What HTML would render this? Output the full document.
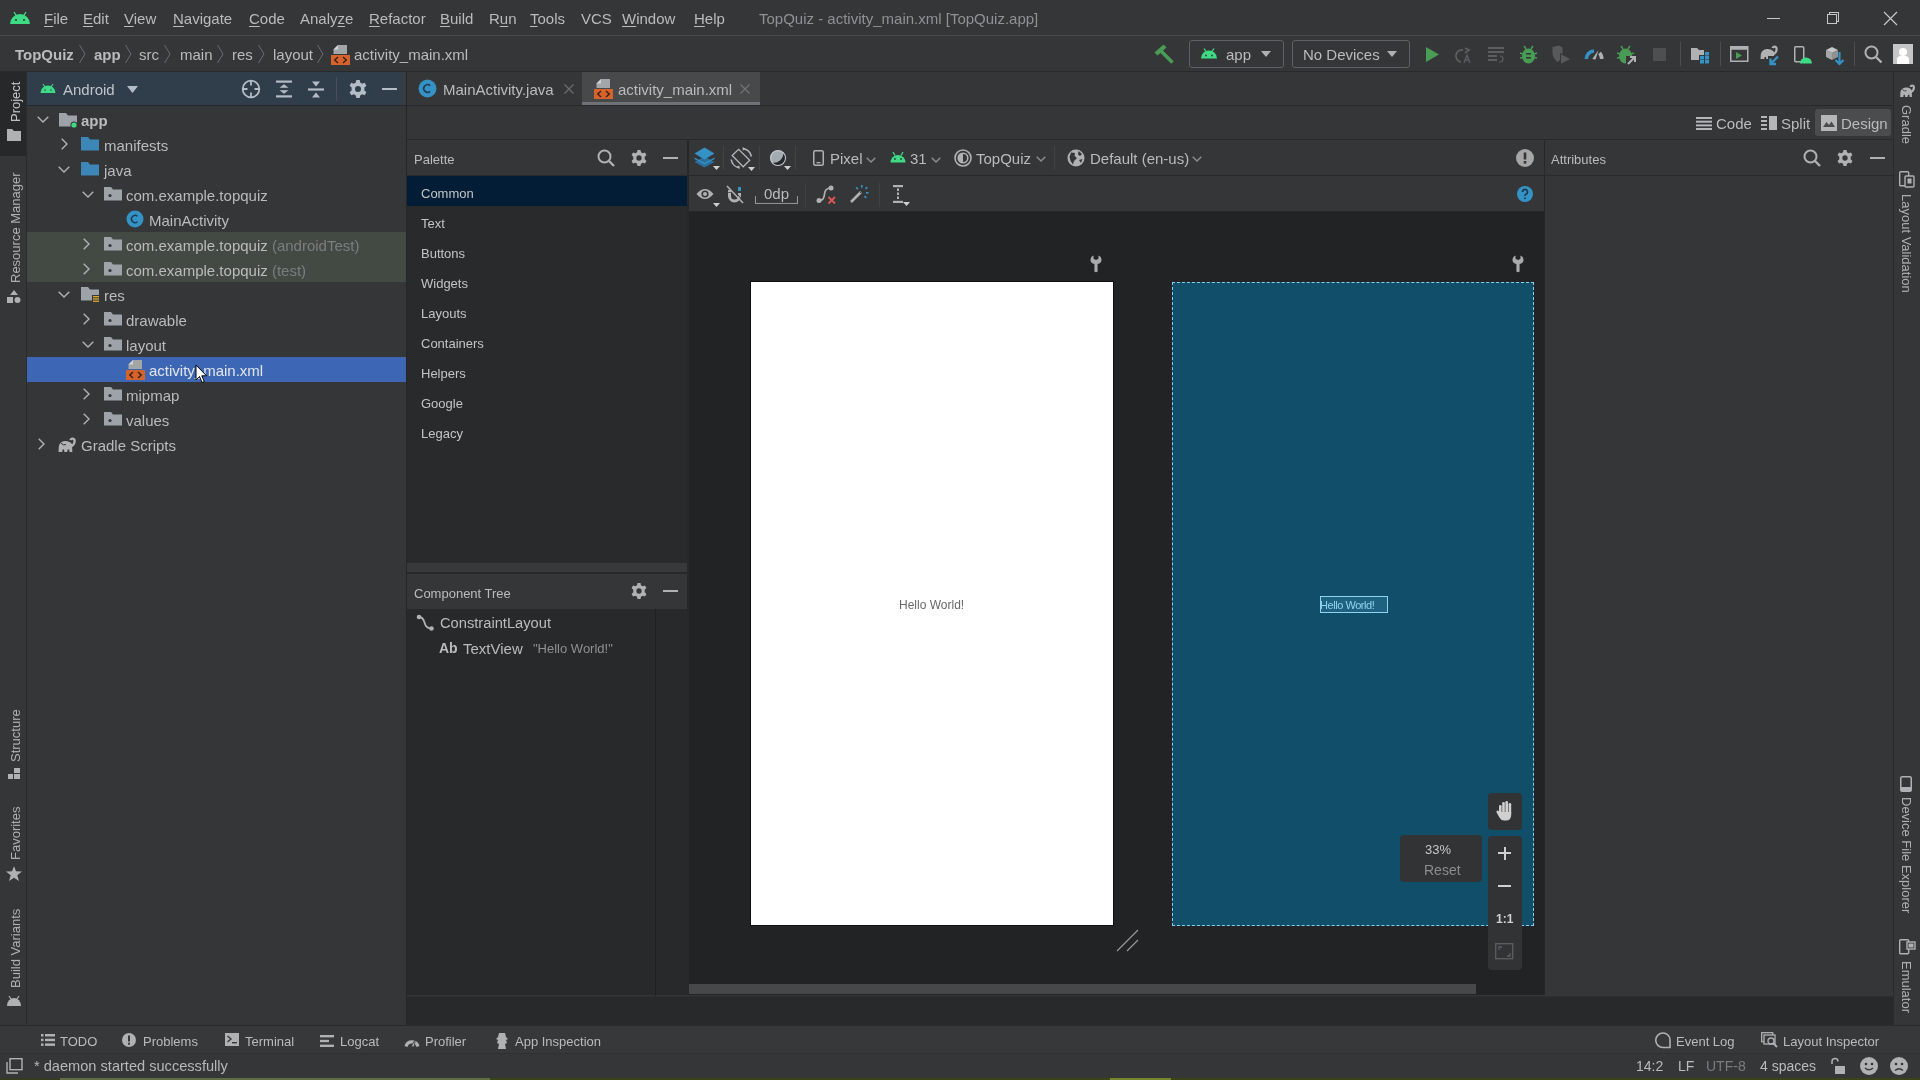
<!DOCTYPE html>
<html><head><meta charset="utf-8">
<style>
*{margin:0;padding:0;box-sizing:border-box}
html,body{width:1920px;height:1080px;overflow:hidden;background:#353638;font-family:"Liberation Sans",sans-serif;color:#bbbbbb;font-size:15px}
.a{position:absolute}
.t{position:absolute;white-space:nowrap;line-height:1;will-change:transform}
svg{position:absolute;overflow:visible}
.u{text-decoration:underline;text-underline-offset:2px;text-decoration-thickness:1px}
</style></head><body>

<!-- MENU BAR -->
<div class="a" style="left:0;top:0;width:1920px;height:36px;background:#353638;border-bottom:1px solid #4a4b4d"></div>
<svg style="left:9px;top:11px" width="22" height="14" viewBox="0 0 22 14"><path d="M1 13 A10 10 0 0 1 21 13 Z" fill="#3ddc84"/><path d="M5 1 L7.5 5 M17 1 L14.5 5" stroke="#3ddc84" stroke-width="1.4"/><circle cx="7" cy="9" r="1" fill="#353638"/><circle cx="15" cy="9" r="1" fill="#353638"/></svg>
<div class="t" style="left:44px;top:11px"><span class="u">F</span>ile</div>
<div class="t" style="left:83px;top:11px"><span class="u">E</span>dit</div>
<div class="t" style="left:124px;top:11px"><span class="u">V</span>iew</div>
<div class="t" style="left:173px;top:11px"><span class="u">N</span>avigate</div>
<div class="t" style="left:249px;top:11px"><span class="u">C</span>ode</div>
<div class="t" style="left:300px;top:11px">Analy<span class="u">z</span>e</div>
<div class="t" style="left:369px;top:11px"><span class="u">R</span>efactor</div>
<div class="t" style="left:440px;top:11px"><span class="u">B</span>uild</div>
<div class="t" style="left:489px;top:11px">R<span class="u">u</span>n</div>
<div class="t" style="left:530px;top:11px"><span class="u">T</span>ools</div>
<div class="t" style="left:581px;top:11px">VCS</div>
<div class="t" style="left:622px;top:11px"><span class="u">W</span>indow</div>
<div class="t" style="left:694px;top:11px"><span class="u">H</span>elp</div>
<div class="t" style="left:759px;top:11px;color:#8f9193">TopQuiz - activity_main.xml [TopQuiz.app]</div>
<div class="a" style="left:1767px;top:18px;width:13px;height:1px;background:#c8c8c8"></div>
<div class="a" style="left:1829px;top:12px;width:10px;height:10px;border:1px solid #c8c8c8"></div>
<div class="a" style="left:1827px;top:14px;width:10px;height:10px;border:1px solid #c8c8c8;background:#353638"></div>
<svg style="left:1884px;top:12px" width="13" height="13"><path d="M0 0 L13 13 M13 0 L0 13" stroke="#c8c8c8" stroke-width="1.2"/></svg>

<!-- NAV BAR -->
<div class="a" style="left:0;top:36px;width:1920px;height:36px;background:#353638;border-bottom:1px solid #28292a"></div>
<div class="t" style="left:15px;top:47px;font-weight:bold">TopQuiz</div>
<div class="t" style="left:94px;top:47px;font-weight:bold">app</div>
<div class="t" style="left:139px;top:47px">src</div>
<div class="t" style="left:180px;top:47px">main</div>
<div class="t" style="left:232px;top:47px">res</div>
<div class="t" style="left:273px;top:47px">layout</div>
<div class="t" style="left:354px;top:47px">activity_main.xml</div>


<!-- nav chevrons -->
<svg style="left:0;top:0" width="1" height="1">
<g stroke="#6b6d70" stroke-width="1" fill="none">
<path d="M79.5 45 L85 54 L79.5 63"/><path d="M125.5 45 L131 54 L125.5 63"/><path d="M164.5 45 L170 54 L164.5 63"/><path d="M217.5 45 L223 54 L217.5 63"/><path d="M258.5 45 L264 54 L258.5 63"/><path d="M317.5 45 L323 54 L317.5 63"/>
</g></svg>
<!-- xml file icon nav -->
<svg style="left:331px;top:45px" width="19" height="20" viewBox="0 0 19 20"><path d="M7 0 L16 0 L16 9 L2.5 9 L2.5 4.5 Z" fill="#a3a6a9"/><path d="M2.5 4.5 L7 4.5 L7 0 Z" fill="#d0d2d4"/><rect x="0" y="10" width="19" height="10" fill="#d6622c"/><path d="M7 12 L3.8 15 L7 18 M12 12 L15.2 15 L12 18" stroke="#3a2418" stroke-width="1.5" fill="none"/></svg>

<!-- toolbar right -->
<svg style="left:1150px;top:38px" width="26" height="28" viewBox="0 0 26 28"><path d="M4.5 14.5 L13.5 6.5 L16.5 9.5 L7.5 17.5 Z" fill="#499c54"/><path d="M10 12 L22.5 24.5" stroke="#499c54" stroke-width="3.6"/></svg>
<div class="a" style="left:1189px;top:40px;width:95px;height:28px;border:1px solid #5e6163;border-radius:3px"></div>
<svg style="left:1200px;top:48px" width="18" height="11" viewBox="0 0 18 11"><path d="M1 10.5 A8 8 0 0 1 17 10.5 Z" fill="#3ddc84"/><path d="M4 0.5 L6 3.5 M14 0.5 L12 3.5" stroke="#3ddc84" stroke-width="1.3"/><circle cx="6" cy="7.5" r="0.9" fill="#353638"/><circle cx="12" cy="7.5" r="0.9" fill="#353638"/></svg>
<div class="t" style="left:1226px;top:47px">app</div>
<svg style="left:1261px;top:51px" width="10" height="6"><path d="M0 0 L10 0 L5 6 Z" fill="#afb1b3"/></svg>
<div class="a" style="left:1292px;top:40px;width:118px;height:28px;border:1px solid #5e6163;border-radius:3px"></div>
<div class="t" style="left:1303px;top:47px">No Devices</div>
<svg style="left:1387px;top:51px" width="10" height="6"><path d="M0 0 L10 0 L5 6 Z" fill="#afb1b3"/></svg>
<svg style="left:1426px;top:47px" width="13" height="15"><path d="M0 0 L13 7.5 L0 15 Z" fill="#499c54"/></svg>
<svg style="left:1455px;top:46px" width="18" height="18" viewBox="0 0 18 18" fill="none" stroke="#5c5e60" stroke-width="1.8"><path d="M8 4 A6 6 0 1 0 6 16"/><path d="M10 2 L14 4 L10 7"/><path d="M9 17 L12 9 L15 17 M10 14 L14 14" stroke-width="1.3"/></svg>
<svg style="left:1488px;top:47px" width="18" height="16" viewBox="0 0 18 16" fill="#5c5e60"><rect x="0" y="0" width="16" height="2"/><rect x="0" y="4" width="16" height="2"/><rect x="0" y="8" width="9" height="2"/><rect x="0" y="12" width="9" height="2"/><path d="M12 9 A3 3 0 1 1 12 15 L11 15" stroke="#5c5e60" stroke-width="1.2" fill="none"/></svg>
<svg style="left:1520px;top:45px" width="17" height="19" viewBox="0 0 17 19"><path d="M4 1 L6 4 M13 1 L11 4" stroke="#499c54" stroke-width="1.5"/><ellipse cx="8.5" cy="11" rx="6.5" ry="7.5" fill="#499c54"/><path d="M0 8 L3 9 M17 8 L14 9 M0 13 L3 12.5 M17 13 L14 12.5" stroke="#499c54" stroke-width="1.5"/><rect x="6" y="8" width="5" height="1.6" fill="#353638"/><rect x="6" y="12" width="5" height="1.6" fill="#353638"/></svg>
<svg style="left:1552px;top:45px" width="20" height="20" viewBox="0 0 20 20"><path d="M0.5 2 L7 0.5 L10.5 2.5 L10.5 9 Q10 14 5.5 17 Q0.5 13 0.5 8 Z" fill="#58595b"/><path d="M8.5 8.5 L19 14 L8.5 19.5 Z" fill="#58595b" stroke="#353638" stroke-width="1"/></svg>
<svg style="left:1584px;top:46px" width="20" height="14" viewBox="0 0 20 14"><path d="M2.3 13 A8 8 0 0 1 10 5" stroke="#3592c4" stroke-width="3.6" fill="none"/><path d="M15.5 7 A8 8 0 0 1 17.7 13" stroke="#afb1b3" stroke-width="3.6" fill="none"/><path d="M8.3 13 L14.5 4 L11.5 13.5 Z" fill="#afb1b3"/></svg>
<svg style="left:1617px;top:45px" width="20" height="20" viewBox="0 0 20 20"><path d="M4 1 L6 4 M13 1 L11 4" stroke="#499c54" stroke-width="1.5"/><ellipse cx="8.5" cy="11" rx="6.5" ry="7.5" fill="#499c54"/><path d="M0 8 L3 9 M17 8 L14 9 M0 13 L3 12.5" stroke="#499c54" stroke-width="1.5"/><rect x="9" y="11" width="11" height="9" fill="#353638"/><path d="M11 19 L18 12 M13 12 L18 12 L18 17" stroke="#afb1b3" stroke-width="2" fill="none"/></svg>
<div class="a" style="left:1653px;top:48px;width:13px;height:13px;background:#4e4f51"></div>
<div class="a" style="left:1680px;top:42px;width:1px;height:24px;background:#4b4d4f"></div>
<svg style="left:1691px;top:48px" width="19" height="16" viewBox="0 0 19 16"><path d="M0 0 L6 0 L8 2 L13 2 L13 7 L8 7 L8 12 L0 12 Z" fill="#afb1b3"/><rect x="9" y="8" width="4" height="3.5" fill="#3592c4"/><rect x="14" y="4" width="4" height="3.5" fill="#3592c4"/><rect x="14" y="8" width="4" height="3.5" fill="#3592c4"/><rect x="9" y="12" width="4" height="3.5" fill="#3592c4"/><rect x="14" y="12" width="4" height="3.5" fill="#3592c4"/></svg>
<div class="a" style="left:1720px;top:42px;width:1px;height:24px;background:#4b4d4f"></div>
<svg style="left:1730px;top:46px" width="19" height="16" viewBox="0 0 19 16"><rect x="0.75" y="0.75" width="17" height="14.5" fill="none" stroke="#afb1b3" stroke-width="1.5"/><rect x="0.75" y="0.75" width="17" height="3" fill="#afb1b3"/><path d="M6 6 L12 9.5 L6 13 Z" fill="#499c54"/></svg>
<svg style="left:1759px;top:45px" width="21" height="21" viewBox="0 0 21 21"><path d="M1.5 14 L1.8 9.5 Q2.5 4.5 8 4 Q11.5 3.8 13.5 5.5 L15 7 L15.3 14 L12.6 14 L12.2 12 L10.6 12 L10.2 14 L7.4 14 L7 12 L5.6 12 L5.2 14 Z" fill="#b0b2b4"/><path d="M13.5 9.5 Q17.6 8 17.6 4 Q17.6 1.6 15.5 1.6 Q13.8 1.6 13.6 3.2" stroke="#b0b2b4" stroke-width="2.2" fill="none"/><rect x="9" y="11" width="12" height="10" fill="#353638"/><path d="M11.5 19 L19 11.5 M11.5 13.5 L11.5 19 L17 19" stroke="#3592c4" stroke-width="2.3" fill="none"/></svg>
<svg style="left:1794px;top:46px" width="18" height="18" viewBox="0 0 18 18"><rect x="0.75" y="0.75" width="9" height="15" rx="1" fill="none" stroke="#afb1b3" stroke-width="1.5"/><path d="M6 17.5 A6 6 0 0 1 18 17.5 Z" fill="#3ddc84"/></svg>
<svg style="left:1825px;top:45px" width="20" height="21" viewBox="0 0 20 21"><path d="M1 5 L7 2 L13 5 L7 8 Z" fill="#c4c6c8"/><path d="M1 5 L7 8 L7 15 L1 12 Z" fill="#a4a6a8"/><path d="M13 5 L7 8 L7 15 L13 12 Z" fill="#8f9193"/><path d="M14.5 7 L14.5 19 M10.5 15 L14.5 19 L18.5 15" stroke="#3592c4" stroke-width="2.2" fill="none"/></svg>
<div class="a" style="left:1854px;top:42px;width:1px;height:24px;background:#4b4d4f"></div>
<svg style="left:1864px;top:45px" width="19" height="19" viewBox="0 0 19 19"><circle cx="7.5" cy="7.5" r="6" fill="none" stroke="#afb1b3" stroke-width="2"/><path d="M12 12 L17.5 17.5" stroke="#afb1b3" stroke-width="2.4"/></svg>
<div class="a" style="left:1893px;top:44px;width:20px;height:20px;background:#c6c6c6;overflow:hidden"><div class="a" style="left:6px;top:4px;width:8px;height:8px;border-radius:50%;background:#fff"></div><div class="a" style="left:4px;top:12px;width:12px;height:10px;border-radius:4px 4px 0 0;background:#fff"></div></div>


<!-- LEFT STRIP -->
<div class="a" style="left:0;top:72px;width:27px;height:953px;background:#353638;border-right:1px solid #2a2b2c"></div>
<div class="a" style="left:0;top:72px;width:26px;height:84px;background:#27282a"></div>
<div class="t" style="left:9px;top:122px;transform:rotate(-90deg);transform-origin:0 0;font-size:13px;color:#c5c5c5">Project</div>
<svg style="left:7px;top:129px" width="14" height="12" viewBox="0 0 14 12"><path d="M0 0 L5 0 L7 2 L14 2 L14 12 L0 12 Z" fill="#afb1b3"/></svg>
<div class="t" style="left:9px;top:283px;transform:rotate(-90deg);transform-origin:0 0;font-size:13px;color:#b0b0b0">Resource Manager</div>
<svg style="left:7px;top:290px" width="14" height="13" viewBox="0 0 14 13"><path d="M7 0 L11 5 L3 5 Z" fill="#afb1b3"/><rect x="0" y="7" width="6" height="6" fill="#afb1b3"/><circle cx="10.5" cy="10" r="3" fill="#afb1b3"/></svg>
<div class="t" style="left:9px;top:762px;transform:rotate(-90deg);transform-origin:0 0;font-size:13px;color:#b0b0b0">Structure</div>
<svg style="left:7px;top:768px" width="14" height="12" viewBox="0 0 14 12"><rect x="7" y="0" width="6" height="5" fill="#afb1b3"/><rect x="1" y="6" width="5" height="5" fill="#afb1b3"/><rect x="7" y="6" width="6" height="5" fill="#afb1b3"/></svg>
<div class="t" style="left:9px;top:860px;transform:rotate(-90deg);transform-origin:0 0;font-size:13px;color:#b0b0b0">Favorites</div>
<svg style="left:6px;top:866px" width="16" height="15" viewBox="0 0 16 15"><path d="M8 0 L10 5.3 L16 5.6 L11.3 9.3 L13 15 L8 11.7 L3 15 L4.7 9.3 L0 5.6 L6 5.3 Z" fill="#afb1b3"/></svg>
<div class="t" style="left:9px;top:988px;transform:rotate(-90deg);transform-origin:0 0;font-size:13px;color:#b0b0b0">Build Variants</div>
<svg style="left:7px;top:996px" width="14" height="10" viewBox="0 0 14 10"><path d="M0 10 A7 8 0 0 1 14 10 Z" fill="#afb1b3"/><path d="M2 0 L4 3 M12 0 L10 3" stroke="#afb1b3" stroke-width="1.2"/></svg>

<!-- PROJECT PANEL -->
<div class="a" style="left:27px;top:72px;width:375px;height:33px;background:#303d4b"></div><div class="a" style="left:402px;top:72px;width:4px;height:33px;background:#393b41"></div>
<div class="a" style="left:27px;top:105px;width:379px;height:1px;background:#27282a"></div>
<div class="a" style="left:406px;top:72px;width:1px;height:953px;background:#252627"></div>
<svg style="left:40px;top:84px" width="16" height="9" viewBox="0 0 16 9"><path d="M0.5 9 A7.5 7.5 0 0 1 15.5 9 Z" fill="#3ddc84"/><path d="M3 0 L5 3 M13 0 L11 3" stroke="#3ddc84" stroke-width="1.2"/><circle cx="5" cy="6" r="0.8" fill="#303d4b"/><circle cx="11" cy="6" r="0.8" fill="#303d4b"/></svg>
<div class="t" style="left:63px;top:82px;color:#c0c4c8">Android</div>
<svg style="left:127px;top:86px" width="11" height="7"><path d="M0 0 L11 0 L5.5 7 Z" fill="#b4bcc6"/></svg>
<svg style="left:241px;top:79px" width="20" height="20" viewBox="0 0 20 20" fill="none" stroke="#b4bcc6" stroke-width="1.8"><circle cx="10" cy="10" r="8.3"/><path d="M10 1.7 L10 6.5 M10 13.5 L10 18.3 M1.7 10 L6.5 10 M13.5 10 L18.3 10"/></svg>
<svg style="left:276px;top:80px" width="16" height="18" viewBox="0 0 16 18" fill="#b4bcc6"><rect x="0" y="0.5" width="16" height="2.2"/><rect x="0" y="15.3" width="16" height="2.2"/><path d="M8 4.3 L12.5 7.8 L3.5 7.8 Z M8 13.7 L12.5 10.2 L3.5 10.2 Z"/></svg>
<svg style="left:308px;top:81px" width="16" height="17" viewBox="0 0 16 17" fill="#b4bcc6"><path d="M4 0.5 L12 0.5 L8 5.5 Z M4 16.5 L12 16.5 L8 11.5 Z"/><rect x="0" y="7.4" width="16" height="2.2"/></svg>
<div class="a" style="left:336px;top:77px;width:1px;height:24px;background:#45505c"></div>
<svg style="left:349px;top:80px" width="18" height="18" viewBox="0 0 18 18"><path fill="#b4bcc6" fill-rule="evenodd" d="M7.3 0 L10.7 0 L11.2 2.6 L13.2 3.7 L15.7 2.8 L17.4 5.7 L15.4 7.5 L15.4 10.5 L17.4 12.3 L15.7 15.2 L13.2 14.3 L11.2 15.4 L10.7 18 L7.3 18 L6.8 15.4 L4.8 14.3 L2.3 15.2 L0.6 12.3 L2.6 10.5 L2.6 7.5 L0.6 5.7 L2.3 2.8 L4.8 3.7 L6.8 2.6 Z M9 6 A3 3 0 1 0 9 12 A3 3 0 1 0 9 6 Z"/></svg>
<div class="a" style="left:382px;top:88px;width:15px;height:2px;background:#b4bcc6"></div>

<!-- tree -->
<div class="a" style="left:27px;top:232px;width:379px;height:50px;background:#434a43"></div>
<div class="a" style="left:27px;top:357px;width:379px;height:25px;background:#3d67b4"></div>
<svg style="left:37px;top:116px" width="12" height="7" viewBox="0 0 12 7"><path d="M0.7 0.7 L6 6 L11.3 0.7" stroke="#afb1b3" stroke-width="1.4" fill="none"/></svg><svg style="left:59px;top:113px" width="19" height="14" viewBox="0 0 19 14"><path d="M0 0 L7 0 L9 2.5 L18 2.5 L18 13.5 L0 13.5 Z" fill="#9da3a8"/><circle cx="15" cy="12" r="3.6" fill="#353638"/><circle cx="15" cy="12" r="2.6" fill="#3ddc84"/></svg><div class="t" style="left:81px;top:113px"><b>app</b></div>
<svg style="left:61px;top:138px" width="7" height="12" viewBox="0 0 7 12"><path d="M0.7 0.7 L6 6 L0.7 11.3" stroke="#afb1b3" stroke-width="1.4" fill="none"/></svg><svg style="left:81px;top:137px" width="19" height="14" viewBox="0 0 19 14"><path d="M0 0 L7 0 L9 2.5 L18 2.5 L18 13.5 L0 13.5 Z" fill="#3d87b8"/></svg><div class="t" style="left:104px;top:138px">manifests</div>
<svg style="left:58px;top:166px" width="12" height="7" viewBox="0 0 12 7"><path d="M0.7 0.7 L6 6 L11.3 0.7" stroke="#afb1b3" stroke-width="1.4" fill="none"/></svg><svg style="left:81px;top:162px" width="19" height="14" viewBox="0 0 19 14"><path d="M0 0 L7 0 L9 2.5 L18 2.5 L18 13.5 L0 13.5 Z" fill="#3d87b8"/></svg><div class="t" style="left:104px;top:163px">java</div>
<svg style="left:82px;top:191px" width="12" height="7" viewBox="0 0 12 7"><path d="M0.7 0.7 L6 6 L11.3 0.7" stroke="#afb1b3" stroke-width="1.4" fill="none"/></svg><svg style="left:104px;top:187px" width="19" height="14" viewBox="0 0 19 14"><path d="M0 0 L7 0 L9 2.5 L18 2.5 L18 13.5 L0 13.5 Z" fill="#9da3a8"/><circle cx="6" cy="8.5" r="1.6" fill="#353638"/></svg><div class="t" style="left:126px;top:188px">com.example.topquiz</div>
<svg style="left:126px;top:210px" width="18" height="18" viewBox="0 0 18 18"><circle cx="9" cy="9" r="8.5" fill="#3592c4"/><path d="M11.5 6.3 A3.6 3.6 0 1 0 11.5 11.7" stroke="#1d3b52" stroke-width="1.5" fill="none"/></svg><div class="t" style="left:149px;top:213px">MainActivity</div>
<svg style="left:83px;top:238px" width="7" height="12" viewBox="0 0 7 12"><path d="M0.7 0.7 L6 6 L0.7 11.3" stroke="#afb1b3" stroke-width="1.4" fill="none"/></svg><svg style="left:104px;top:237px" width="19" height="14" viewBox="0 0 19 14"><path d="M0 0 L7 0 L9 2.5 L18 2.5 L18 13.5 L0 13.5 Z" fill="#9da3a8"/><circle cx="6" cy="8.5" r="1.6" fill="#353638"/></svg><div class="t" style="left:126px;top:238px">com.example.topquiz <span style="color:#7b7e80">(androidTest)</span></div>
<svg style="left:83px;top:263px" width="7" height="12" viewBox="0 0 7 12"><path d="M0.7 0.7 L6 6 L0.7 11.3" stroke="#afb1b3" stroke-width="1.4" fill="none"/></svg><svg style="left:104px;top:262px" width="19" height="14" viewBox="0 0 19 14"><path d="M0 0 L7 0 L9 2.5 L18 2.5 L18 13.5 L0 13.5 Z" fill="#9da3a8"/><circle cx="6" cy="8.5" r="1.6" fill="#353638"/></svg><div class="t" style="left:126px;top:263px">com.example.topquiz <span style="color:#7b7e80">(test)</span></div>
<svg style="left:58px;top:291px" width="12" height="7" viewBox="0 0 12 7"><path d="M0.7 0.7 L6 6 L11.3 0.7" stroke="#afb1b3" stroke-width="1.4" fill="none"/></svg><svg style="left:81px;top:287px" width="19" height="14" viewBox="0 0 19 14"><path d="M0 0 L7 0 L9 2.5 L18 2.5 L18 13.5 L0 13.5 Z" fill="#9da3a8"/><rect x="11" y="8" width="8" height="7" fill="#353638"/><g fill="#e0a82e"><rect x="12" y="9" width="6" height="1.3"/><rect x="12" y="11.3" width="6" height="1.3"/><rect x="12" y="13.6" width="6" height="1.3"/></g></svg><div class="t" style="left:104px;top:288px">res</div>
<svg style="left:83px;top:313px" width="7" height="12" viewBox="0 0 7 12"><path d="M0.7 0.7 L6 6 L0.7 11.3" stroke="#afb1b3" stroke-width="1.4" fill="none"/></svg><svg style="left:104px;top:312px" width="19" height="14" viewBox="0 0 19 14"><path d="M0 0 L7 0 L9 2.5 L18 2.5 L18 13.5 L0 13.5 Z" fill="#9da3a8"/><circle cx="6" cy="8.5" r="1.6" fill="#353638"/></svg><div class="t" style="left:126px;top:313px">drawable</div>
<svg style="left:82px;top:341px" width="12" height="7" viewBox="0 0 12 7"><path d="M0.7 0.7 L6 6 L11.3 0.7" stroke="#afb1b3" stroke-width="1.4" fill="none"/></svg><svg style="left:104px;top:337px" width="19" height="14" viewBox="0 0 19 14"><path d="M0 0 L7 0 L9 2.5 L18 2.5 L18 13.5 L0 13.5 Z" fill="#9da3a8"/><circle cx="6" cy="8.5" r="1.6" fill="#353638"/></svg><div class="t" style="left:126px;top:338px">layout</div>
<svg style="left:126px;top:360px" width="19" height="20" viewBox="0 0 19 20"><path d="M7 0 L16 0 L16 9 L2.5 9 L2.5 4.5 Z" fill="#a3a6a9"/><path d="M2.5 4.5 L7 4.5 L7 0 Z" fill="#d0d2d4"/><rect x="0" y="10" width="19" height="10" fill="#d6622c"/><path d="M7 12 L3.8 15 L7 18 M12 12 L15.2 15 L12 18" stroke="#3a2418" stroke-width="1.5" fill="none"/></svg><div class="t" style="left:149px;top:363px;color:#e2e6ec">activity_main.xml</div>
<svg style="left:83px;top:388px" width="7" height="12" viewBox="0 0 7 12"><path d="M0.7 0.7 L6 6 L0.7 11.3" stroke="#afb1b3" stroke-width="1.4" fill="none"/></svg><svg style="left:104px;top:387px" width="19" height="14" viewBox="0 0 19 14"><path d="M0 0 L7 0 L9 2.5 L18 2.5 L18 13.5 L0 13.5 Z" fill="#9da3a8"/><circle cx="6" cy="8.5" r="1.6" fill="#353638"/></svg><div class="t" style="left:126px;top:388px">mipmap</div>
<svg style="left:83px;top:413px" width="7" height="12" viewBox="0 0 7 12"><path d="M0.7 0.7 L6 6 L0.7 11.3" stroke="#afb1b3" stroke-width="1.4" fill="none"/></svg><svg style="left:104px;top:412px" width="19" height="14" viewBox="0 0 19 14"><path d="M0 0 L7 0 L9 2.5 L18 2.5 L18 13.5 L0 13.5 Z" fill="#9da3a8"/><circle cx="6" cy="8.5" r="1.6" fill="#353638"/></svg><div class="t" style="left:126px;top:413px">values</div>
<svg style="left:38px;top:438px" width="7" height="12" viewBox="0 0 7 12"><path d="M0.7 0.7 L6 6 L0.7 11.3" stroke="#afb1b3" stroke-width="1.4" fill="none"/></svg><svg style="left:56px;top:437px" width="21" height="16" viewBox="0 0 21 16"><path d="M2.5 15 L2.8 9.5 Q3.5 4.5 9 4 Q12.5 3.8 14.5 5.5 L16 7 L16.3 15 L13.6 15 L13.2 12.5 L11.6 12.5 L11.2 15 L8.4 15 L8 12.5 L6.6 12.5 L6.2 15 Z" fill="#b0b2b4"/><path d="M14.5 9.5 Q18.6 8 18.6 4 Q18.6 1.6 16.5 1.6 Q14.8 1.6 14.6 3.2" stroke="#b0b2b4" stroke-width="2.4" fill="none"/><path d="M5 6.2 Q7 8.8 10 7.6" stroke="#353638" stroke-width="1" fill="none"/></svg><div class="t" style="left:81px;top:438px">Gradle Scripts</div>
<svg style="left:195px;top:364px" width="13" height="20" viewBox="0 0 13 20"><path d="M1 1 L1 16 L4.5 12.5 L7 18.5 L9.3 17.5 L6.8 11.8 L11.5 11.8 Z" fill="#fff" stroke="#000" stroke-width="1"/></svg>

<!-- EDITOR TABS -->
<div class="a" style="left:407px;top:72px;width:1486px;height:33px;background:#353638"></div>
<div class="a" style="left:407px;top:105px;width:1486px;height:1px;background:#28292a"></div>
<svg style="left:418px;top:79px" width="19" height="19" viewBox="0 0 18 18"><circle cx="9" cy="9" r="8.5" fill="#3592c4"/><path d="M11.5 6.3 A3.6 3.6 0 1 0 11.5 11.7" stroke="#1d3b52" stroke-width="1.5" fill="none"/></svg>
<div class="t" style="left:443px;top:82px">MainActivity.java</div>
<svg style="left:564px;top:84px" width="10" height="10"><path d="M0.5 0.5 L9.5 9.5 M9.5 0.5 L0.5 9.5" stroke="#6b6d6f" stroke-width="1.2"/></svg>
<div class="a" style="left:582px;top:72px;width:178px;height:33px;background:#48494b"></div>
<div class="a" style="left:582px;top:102px;width:178px;height:3px;background:#6f7176"></div>
<svg style="left:594px;top:79px" width="19" height="20" viewBox="0 0 19 20"><path d="M7 0 L16 0 L16 9 L2.5 9 L2.5 4.5 Z" fill="#a3a6a9"/><path d="M2.5 4.5 L7 4.5 L7 0 Z" fill="#d0d2d4"/><rect x="0" y="10" width="19" height="10" fill="#d6622c"/><path d="M7 12 L3.8 15 L7 18 M12 12 L15.2 15 L12 18" stroke="#3a2418" stroke-width="1.5" fill="none"/></svg>
<div class="t" style="left:618px;top:82px">activity_main.xml</div>
<svg style="left:740px;top:84px" width="10" height="10"><path d="M0.5 0.5 L9.5 9.5 M9.5 0.5 L0.5 9.5" stroke="#707274" stroke-width="1.2"/></svg>

<!-- code/split/design row -->
<div class="a" style="left:407px;top:106px;width:1486px;height:33px;background:#353638"></div>
<div class="a" style="left:407px;top:139px;width:1486px;height:1px;background:#28292a"></div>
<svg style="left:1696px;top:117px" width="16" height="13" viewBox="0 0 16 13" fill="#b4b6b8"><rect y="0" width="16" height="2"/><rect y="3.7" width="16" height="2"/><rect y="7.4" width="16" height="2"/><rect y="11" width="16" height="2"/></svg>
<div class="t" style="left:1716px;top:116px">Code</div>
<svg style="left:1761px;top:116px" width="16" height="14" viewBox="0 0 16 14" fill="#b4b6b8"><rect y="0" width="6" height="2"/><rect y="4" width="6" height="2"/><rect y="8" width="6" height="2"/><rect y="12" width="6" height="2"/><rect x="8" y="0" width="8" height="14"/></svg>
<div class="t" style="left:1781px;top:116px">Split</div>
<div class="a" style="left:1815px;top:109px;width:76px;height:27px;background:#4a4c4e;border-radius:3px"></div>
<svg style="left:1821px;top:115px" width="16" height="16" viewBox="0 0 16 16"><rect x="0.75" y="0.75" width="14.5" height="14.5" fill="#b4b6b8" stroke="#b4b6b8" stroke-width="1.5"/><path d="M2 12 L5.5 7 L8 10 L10.5 6.5 L14 12 Z" fill="#4a4c4e"/></svg>
<div class="t" style="left:1841px;top:116px">Design</div>

<!-- PALETTE -->
<div class="a" style="left:407px;top:140px;width:280px;height:35px;background:#353638"></div>
<div class="t" style="left:414px;top:153px;font-size:13px">Palette</div>
<svg style="left:597px;top:149px" width="18" height="18" viewBox="0 0 18 18"><circle cx="7.5" cy="7.5" r="6" fill="none" stroke="#afb1b3" stroke-width="2"/><path d="M12 12 L17 17" stroke="#afb1b3" stroke-width="2.4"/></svg>
<svg style="left:631px;top:150px" width="16" height="16" viewBox="0 0 18 18"><path fill="#afb1b3" fill-rule="evenodd" d="M7.3 0 L10.7 0 L11.2 2.6 L13.2 3.7 L15.7 2.8 L17.4 5.7 L15.4 7.5 L15.4 10.5 L17.4 12.3 L15.7 15.2 L13.2 14.3 L11.2 15.4 L10.7 18 L7.3 18 L6.8 15.4 L4.8 14.3 L2.3 15.2 L0.6 12.3 L2.6 10.5 L2.6 7.5 L0.6 5.7 L2.3 2.8 L4.8 3.7 L6.8 2.6 Z M9 6 A3 3 0 1 0 9 12 A3 3 0 1 0 9 6 Z"/></svg>
<div class="a" style="left:663px;top:157px;width:15px;height:2px;background:#afb1b3"></div>
<div class="a" style="left:407px;top:175px;width:280px;height:1px;background:#2a2b2c"></div>
<div class="a" style="left:407px;top:176px;width:280px;height:387px;background:#292a2c"></div>
<div class="a" style="left:407px;top:176px;width:280px;height:30px;background:#041d37"></div>
<div class="t" style="left:421px;top:187px;font-size:13px;color:#c4c4c4">Common</div>
<div class="t" style="left:421px;top:217px;font-size:13px;color:#c4c4c4">Text</div>
<div class="t" style="left:421px;top:247px;font-size:13px;color:#c4c4c4">Buttons</div>
<div class="t" style="left:421px;top:277px;font-size:13px;color:#c4c4c4">Widgets</div>
<div class="t" style="left:421px;top:307px;font-size:13px;color:#c4c4c4">Layouts</div>
<div class="t" style="left:421px;top:337px;font-size:13px;color:#c4c4c4">Containers</div>
<div class="t" style="left:421px;top:367px;font-size:13px;color:#c4c4c4">Helpers</div>
<div class="t" style="left:421px;top:397px;font-size:13px;color:#c4c4c4">Google</div>
<div class="t" style="left:421px;top:427px;font-size:13px;color:#c4c4c4">Legacy</div>

<div class="a" style="left:407px;top:563px;width:280px;height:9px;background:#38393b"></div>
<div class="a" style="left:407px;top:572px;width:280px;height:2px;background:#27282a"></div>
<!-- COMPONENT TREE -->
<div class="a" style="left:407px;top:574px;width:280px;height:35px;background:#353638"></div>
<div class="t" style="left:414px;top:587px;font-size:13px">Component Tree</div>
<svg style="left:631px;top:583px" width="16" height="16" viewBox="0 0 18 18"><path fill="#afb1b3" fill-rule="evenodd" d="M7.3 0 L10.7 0 L11.2 2.6 L13.2 3.7 L15.7 2.8 L17.4 5.7 L15.4 7.5 L15.4 10.5 L17.4 12.3 L15.7 15.2 L13.2 14.3 L11.2 15.4 L10.7 18 L7.3 18 L6.8 15.4 L4.8 14.3 L2.3 15.2 L0.6 12.3 L2.6 10.5 L2.6 7.5 L0.6 5.7 L2.3 2.8 L4.8 3.7 L6.8 2.6 Z M9 6 A3 3 0 1 0 9 12 A3 3 0 1 0 9 6 Z"/></svg>
<div class="a" style="left:663px;top:590px;width:15px;height:2px;background:#afb1b3"></div>
<div class="a" style="left:407px;top:609px;width:280px;height:386px;background:#28292b"></div>
<div class="a" style="left:655px;top:609px;width:1px;height:387px;background:#1e1f21"></div>
<svg style="left:416px;top:614px" width="19" height="18" viewBox="0 0 19 18"><circle cx="3" cy="3" r="2.3" fill="#afb1b3"/><circle cx="15.5" cy="14.5" r="2.3" fill="#afb1b3"/><path d="M3 3 Q7 3 8.5 8.5 Q10 14.5 15.5 14.5" stroke="#afb1b3" stroke-width="1.8" fill="none"/></svg>
<div class="t" style="left:440px;top:616px;font-size:14.7px">ConstraintLayout</div>
<div class="t" style="left:439px;top:641px;font-weight:bold;font-size:14px">Ab</div>
<div class="t" style="left:463px;top:641px">TextView</div>
<div class="t" style="left:533px;top:642px;font-size:13px;color:#8e9092">"Hello World!"</div>


<!-- DESIGN TOOLBAR -->
<div class="a" style="left:687px;top:140px;width:2px;height:855px;background:#27282a"></div>
<div class="a" style="left:689px;top:140px;width:855px;height:35px;background:#353638"></div>
<div class="a" style="left:689px;top:175px;width:855px;height:1px;background:#27282a"></div>
<div class="a" style="left:689px;top:176px;width:855px;height:35px;background:#353638"></div>
<div class="a" style="left:689px;top:211px;width:855px;height:1px;background:#27282a"></div>
<div class="a" style="left:1544px;top:140px;width:1px;height:855px;background:#27282a"></div>
<div class="a" style="left:689px;top:212px;width:855px;height:783px;background:#222325"></div>
<!-- row1 icons -->
<svg style="left:694px;top:147px" width="21" height="21" viewBox="0 0 21 21"><path d="M10.5 9.5 L20.5 15 L10.5 20.5 L0.5 15 Z" fill="#2a6fa0"/><path d="M10.5 0.5 L20.5 6.5 L10.5 12.5 L0.5 6.5 Z" fill="#3592c4"/><path d="M0.5 10.5 L10.5 16 L20.5 10.5 L20.5 12 L10.5 17.5 L0.5 12 Z" fill="#3592c4"/></svg>
<svg style="left:713px;top:166px" width="7" height="4"><path d="M0 0 L7 0 L3.5 4 Z" fill="#d0d0d0"/></svg>
<div class="a" style="left:723px;top:146px;width:1px;height:24px;background:#414244"></div>
<svg style="left:730px;top:147px" width="22" height="22" viewBox="0 0 22 22" fill="none" stroke="#b4b6b8" stroke-width="1.3"><path d="M2.2 8.5 L8.6 2.3 L19.7 13.2 L13.2 19.8 Z"/><path d="M13 1.6 A9.5 9.5 0 0 1 21.3 9.5" stroke-width="1.6"/><path d="M1.2 12.5 A9.5 9.5 0 0 0 9.5 20.6" stroke-width="1.6"/><path d="M12.5 0 L15.5 2 L12.8 3.5 Z M9.5 22 L6.5 20 L9.3 18.5 Z" fill="#b4b6b8" stroke="none"/></svg>
<svg style="left:748px;top:167px" width="7" height="4"><path d="M0 0 L7 0 L3.5 4 Z" fill="#d0d0d0"/></svg>
<div class="a" style="left:759px;top:146px;width:1px;height:24px;background:#414244"></div>
<svg style="left:769px;top:149px" width="18" height="18" viewBox="0 0 18 18"><circle cx="9" cy="9" r="7.4" fill="#a2aab2" stroke="#c4c8cc" stroke-width="1.3"/><path d="M14.3 4.4 A6.6 6.6 0 0 1 3.6 13.6 A9.5 9.5 0 0 0 14.3 4.4 Z" fill="#25272b"/></svg>
<svg style="left:784px;top:166px" width="7" height="4"><path d="M0 0 L7 0 L3.5 4 Z" fill="#d0d0d0"/></svg>
<div class="a" style="left:795px;top:146px;width:1px;height:24px;background:#414244"></div>
<svg style="left:813px;top:150px" width="11" height="16" viewBox="0 0 11 16"><rect x="0.75" y="0.75" width="9.5" height="14.5" rx="1.5" fill="none" stroke="#afb1b3" stroke-width="1.5"/><rect x="3.5" y="12" width="4" height="1.3" fill="#afb1b3"/></svg>
<div class="t" style="left:830px;top:151px">Pixel</div>
<svg style="left:866px;top:157px" width="10" height="6" viewBox="0 0 10 6"><path d="M0.7 0.7 L5 5 L9.3 0.7" stroke="#8c8e90" stroke-width="1.4" fill="none"/></svg>
<svg style="left:890px;top:151px" width="16" height="12" viewBox="0 0 16 12"><path d="M0.5 11.5 A7.5 7.5 0 0 1 15.5 11.5 Z" fill="#3ddc84"/><path d="M3 1 L5 4.5 M13 1 L11 4.5" stroke="#3ddc84" stroke-width="1.3"/><circle cx="5" cy="8" r="0.9" fill="#353638"/><circle cx="11" cy="8" r="0.9" fill="#353638"/></svg>
<div class="t" style="left:910px;top:151px">31</div>
<svg style="left:931px;top:157px" width="10" height="6" viewBox="0 0 10 6"><path d="M0.7 0.7 L5 5 L9.3 0.7" stroke="#8c8e90" stroke-width="1.4" fill="none"/></svg>
<svg style="left:954px;top:149px" width="18" height="18" viewBox="0 0 18 18"><circle cx="9" cy="9" r="8" fill="none" stroke="#afb1b3" stroke-width="1.6"/><circle cx="9" cy="9" r="4.8" fill="none" stroke="#afb1b3" stroke-width="1.6"/><path d="M9 4.2 L9 13.8 A4.8 4.8 0 0 1 9 4.2 Z" fill="#afb1b3"/></svg>
<div class="t" style="left:976px;top:151px">TopQuiz</div>
<svg style="left:1036px;top:156px" width="10" height="6" viewBox="0 0 10 6"><path d="M0.7 0.7 L5 5 L9.3 0.7" stroke="#8c8e90" stroke-width="1.4" fill="none"/></svg>
<div class="a" style="left:1054px;top:146px;width:1px;height:24px;background:#414244"></div>
<svg style="left:1067px;top:149px" width="18" height="18" viewBox="0 0 18 18"><circle cx="9" cy="9" r="8.5" fill="#afb1b3"/><path d="M4 3.5 L8 4 L7.5 7 L10 9 L7 12 L6 15.5 L3.5 12 L2.5 8 Z M11.5 2 L15 5 L13 7 L11 5.5 Z M12 11 L15.5 10 L14 14 Z" fill="#353638"/></svg>
<div class="t" style="left:1090px;top:151px">Default (en-us)</div>
<svg style="left:1192px;top:156px" width="10" height="6" viewBox="0 0 10 6"><path d="M0.7 0.7 L5 5 L9.3 0.7" stroke="#8c8e90" stroke-width="1.4" fill="none"/></svg>
<svg style="left:1516px;top:149px" width="18" height="18" viewBox="0 0 18 18"><circle cx="9" cy="9" r="9" fill="#a6a6a6"/><rect x="7.7" y="3.5" width="2.6" height="7" fill="#353638"/><rect x="7.7" y="12" width="2.6" height="2.6" fill="#353638"/></svg>
<!-- row2 icons -->
<svg style="left:696px;top:187px" width="18" height="14" viewBox="0 0 18 14"><path d="M0.5 7 Q9 -3 17.5 7 Q9 17 0.5 7 Z" fill="#afb1b3"/><circle cx="9" cy="7" r="3.6" fill="#353638"/><circle cx="9" cy="7" r="2" fill="#afb1b3"/></svg>
<svg style="left:713px;top:203px" width="7" height="4"><path d="M0 0 L7 0 L3.5 4 Z" fill="#d0d0d0"/></svg>
<svg style="left:726px;top:185px" width="19" height="19" viewBox="0 0 19 19"><path d="M2 8 L2 11 A6.5 6.5 0 0 0 15 11 L15 8 L12 8 L12 11 A3.5 3.5 0 0 1 5 11 L5 8 Z" fill="#afb1b3"/><rect x="12" y="2" width="3" height="4" fill="#3592c4"/><rect x="2" y="5" width="3" height="2.3" fill="#afb1b3"/><path d="M1 1 L17 18" stroke="#afb1b3" stroke-width="1.6"/><path d="M2.5 0 L18.5 17" stroke="#353638" stroke-width="1"/></svg>
<div class="t" style="left:764px;top:186px;font-size:15px">0dp</div>
<svg style="left:755px;top:196px" width="43" height="9" viewBox="0 0 44 9" fill="none" stroke="#9a9c9e" stroke-width="1"><path d="M0.5 0 L0.5 8 M43.5 0 L43.5 8 M0.5 7.5 L43.5 7.5"/></svg>
<div class="a" style="left:805px;top:183px;width:1px;height:24px;background:#414244"></div>
<svg style="left:816px;top:185px" width="21" height="19" viewBox="0 0 21 19"><circle cx="3" cy="15.5" r="2.5" fill="#afb1b3"/><circle cx="15" cy="3" r="2.5" fill="#afb1b3"/><path d="M3 15.5 Q8 16 8.5 9 Q9 3 15 3" stroke="#afb1b3" stroke-width="1.7" fill="none"/><path d="M12.5 12 L19 18.5 M19 12 L12.5 18.5" stroke="#e05555" stroke-width="1.8"/></svg>
<svg style="left:850px;top:185px" width="19" height="19" viewBox="0 0 19 19"><path d="M1 17 L11 7" stroke="#afb1b3" stroke-width="2.6"/><path d="M10 8 L12 6" stroke="#353638" stroke-width="1"/><g fill="#3592c4"><rect x="11" y="0" width="1.6" height="2.6"/><rect x="15.5" y="1.5" width="1.6" height="2.6" transform="rotate(45 16 3)"/><rect x="16" y="7" width="2.6" height="1.6"/><rect x="14.5" y="11" width="1.6" height="2.6" transform="rotate(-45 15 12)"/><rect x="6" y="2" width="1.6" height="2.6" transform="rotate(-45 7 3)"/></g></svg>
<div class="a" style="left:879px;top:183px;width:1px;height:24px;background:#414244"></div>
<svg style="left:893px;top:185px" width="11" height="18" viewBox="0 0 11 18" fill="#afb1b3"><rect x="0" y="0" width="10" height="2.2"/><rect x="0" y="15.8" width="10" height="2.2"/><rect x="4" y="3.5" width="2" height="2.5"/><rect x="4" y="7.5" width="2" height="2.5"/><rect x="4" y="11.5" width="2" height="2.5"/></svg>
<svg style="left:903px;top:202px" width="7" height="4"><path d="M0 0 L7 0 L3.5 4 Z" fill="#d0d0d0"/></svg>
<svg style="left:1517px;top:186px" width="16" height="16" viewBox="0 0 16 16"><circle cx="8" cy="8" r="8" fill="#3592c4"/><path d="M5.5 6 A2.5 2.5 0 1 1 8.8 8.3 Q8 8.7 8 10" stroke="#1b3347" stroke-width="1.6" fill="none"/><rect x="7.2" y="11.5" width="1.6" height="1.6" fill="#1b3347"/></svg>

<!-- DESIGN SURFACE -->
<div class="a" style="left:750px;top:281px;width:364px;height:645px;background:#0e0f10"></div>
<div class="a" style="left:751px;top:282px;width:362px;height:643px;background:#ffffff"></div>
<div class="t" style="left:899px;top:599px;font-size:12px;color:#686868">Hello World!</div>
<div class="a" style="left:1172px;top:282px;width:362px;height:644px;background:#114e6a;border:1px dashed #8ccce8"></div>
<div class="a" style="left:1320px;top:596px;width:68px;height:17px;border:1.5px solid #8fd3f0;background:#1f627f"></div>
<div class="t" style="left:1320px;top:600px;font-size:11px;color:#8fd3f0;letter-spacing:-0.45px">Hello World!</div>
<svg style="left:1090px;top:255px" width="12" height="18" viewBox="0 0 12 18"><path d="M3.5 0.5 L3.5 3.5 L5 4.8 L7 4.8 L8.5 3.5 L8.5 0.5 Q11.5 1.8 11.5 5 Q11.5 8.2 7.6 9 L7.6 16.5 Q6 18 4.4 16.5 L4.4 9 Q0.5 8.2 0.5 5 Q0.5 1.8 3.5 0.5 Z" fill="#a8aaac"/></svg>
<svg style="left:1512px;top:255px" width="12" height="18" viewBox="0 0 12 18"><path d="M3.5 0.5 L3.5 3.5 L5 4.8 L7 4.8 L8.5 3.5 L8.5 0.5 Q11.5 1.8 11.5 5 Q11.5 8.2 7.6 9 L7.6 16.5 Q6 18 4.4 16.5 L4.4 9 Q0.5 8.2 0.5 5 Q0.5 1.8 3.5 0.5 Z" fill="#a8aaac"/></svg>
<svg style="left:1116px;top:929px" width="24" height="24" viewBox="0 0 24 24" stroke="#9a9c9e" stroke-width="1.1"><path d="M1 22 L22 1 M11 22 L22 11"/></svg>
<!-- zoom controls -->
<div class="a" style="left:1488px;top:793px;width:34px;height:37px;background:#323335;border-radius:4px"></div>
<svg style="left:1496px;top:801px" width="18" height="20" viewBox="0 0 18 20" fill="#d0d0d0"><rect x="3" y="4" width="2.6" height="9" rx="1.3"/><rect x="6.2" y="1" width="2.6" height="11" rx="1.3"/><rect x="9.4" y="0" width="2.6" height="12" rx="1.3"/><rect x="12.6" y="2" width="2.6" height="11" rx="1.3"/><path d="M3 11 L15.2 11 L15.2 14 Q15 19.5 10 19.5 L8 19.5 Q5 19.5 3.5 16.5 L0.6 11.5 Q0 10 1.3 9.6 Q2.4 9.4 3 10.5 Z"/></svg>
<div class="a" style="left:1400px;top:835px;width:82px;height:47px;background:#323335;border-radius:4px"></div>
<div class="t" style="left:1425px;top:843px;font-size:13px;color:#c8c8c8">33%</div>
<div class="t" style="left:1424px;top:863px;font-size:14px;color:#8a8c8e">Reset</div>
<div class="a" style="left:1488px;top:836px;width:34px;height:134px;background:#323335;border-radius:4px"></div>
<div class="a" style="left:1498px;top:852px;width:13px;height:2px;background:#d0d0d0"></div>
<div class="a" style="left:1503.5px;top:846.5px;width:2px;height:13px;background:#d0d0d0"></div>
<div class="a" style="left:1498px;top:885px;width:13px;height:2px;background:#d0d0d0"></div>
<div class="t" style="left:1496px;top:913px;font-size:12px;font-weight:bold;color:#d0d0d0">1:1</div>
<svg style="left:1495px;top:943px" width="19" height="17" viewBox="0 0 19 17" fill="none" stroke="#5d5f61" stroke-width="1.3"><rect x="0.7" y="0.7" width="17" height="15"/><path d="M4 7 L4 4 L7 4 M15 10 L15 13 L12 13"/></svg>
<div class="a" style="left:689px;top:984px;width:787px;height:10px;background:#47484a"></div>

<!-- ATTRIBUTES -->
<div class="a" style="left:1545px;top:140px;width:348px;height:35px;background:#353638"></div>
<div class="a" style="left:1545px;top:175px;width:348px;height:1px;background:#2a2b2c"></div>
<div class="a" style="left:1545px;top:176px;width:348px;height:820px;background:#353638"></div>
<div class="t" style="left:1551px;top:153px;font-size:13px">Attributes</div>
<svg style="left:1803px;top:149px" width="18" height="18" viewBox="0 0 18 18"><circle cx="7.5" cy="7.5" r="6" fill="none" stroke="#afb1b3" stroke-width="2"/><path d="M12 12 L17 17" stroke="#afb1b3" stroke-width="2.4"/></svg>
<svg style="left:1837px;top:150px" width="16" height="16" viewBox="0 0 18 18"><path fill="#afb1b3" fill-rule="evenodd" d="M7.3 0 L10.7 0 L11.2 2.6 L13.2 3.7 L15.7 2.8 L17.4 5.7 L15.4 7.5 L15.4 10.5 L17.4 12.3 L15.7 15.2 L13.2 14.3 L11.2 15.4 L10.7 18 L7.3 18 L6.8 15.4 L4.8 14.3 L2.3 15.2 L0.6 12.3 L2.6 10.5 L2.6 7.5 L0.6 5.7 L2.3 2.8 L4.8 3.7 L6.8 2.6 Z M9 6 A3 3 0 1 0 9 12 A3 3 0 1 0 9 6 Z"/></svg>
<div class="a" style="left:1870px;top:157px;width:15px;height:2px;background:#afb1b3"></div>

<!-- editor bottom strip -->
<div class="a" style="left:407px;top:996px;width:1486px;height:1px;background:#2d2e30"></div>
<div class="a" style="left:407px;top:997px;width:1486px;height:28px;background:#28292b"></div>


<!-- RIGHT STRIP -->
<div class="a" style="left:1893px;top:72px;width:1px;height:953px;background:#2a2b2c"></div>
<div class="a" style="left:1894px;top:72px;width:26px;height:953px;background:#353638"></div>
<svg style="left:1898px;top:84px" width="18" height="14" viewBox="0 0 21 16"><path d="M2.5 15 L2.8 9.5 Q3.5 4.5 9 4 Q12.5 3.8 14.5 5.5 L16 7 L16.3 15 L13.6 15 L13.2 12.5 L11.6 12.5 L11.2 15 L8.4 15 L8 12.5 L6.6 12.5 L6.2 15 Z" fill="#afb1b3"/><path d="M14.5 9.5 Q18.6 8 18.6 4 Q18.6 1.6 16.5 1.6 Q14.8 1.6 14.6 3.2" stroke="#afb1b3" stroke-width="2.4" fill="none"/><path d="M5 6.2 Q7 8.8 10 7.6" stroke="#353638" stroke-width="1" fill="none"/></svg>
<div class="t" style="left:1913px;top:105px;transform:rotate(90deg);transform-origin:0 0;font-size:13px;color:#b0b0b0">Gradle</div>
<svg style="left:1899px;top:171px" width="16" height="17" viewBox="0 0 16 17" fill="none" stroke="#afb1b3" stroke-width="1.4"><rect x="0.7" y="0.7" width="9" height="14" rx="1"/><rect x="6" y="5" width="9" height="11" rx="1" fill="#353638"/><rect x="8.5" y="7.5" width="4" height="5" fill="#afb1b3" stroke="none"/></svg>
<div class="t" style="left:1913px;top:194px;transform:rotate(90deg);transform-origin:0 0;font-size:13px;color:#b0b0b0">Layout Validation</div>
<svg style="left:1900px;top:776px" width="12" height="16" viewBox="0 0 12 16"><rect x="0.75" y="0.75" width="10.5" height="14.5" rx="1.5" fill="none" stroke="#afb1b3" stroke-width="1.5"/><rect x="0.75" y="11" width="10.5" height="4.2" fill="#afb1b3"/></svg>
<div class="t" style="left:1913px;top:797px;transform:rotate(90deg);transform-origin:0 0;font-size:13px;color:#b0b0b0">Device File Explorer</div>
<svg style="left:1899px;top:939px" width="17" height="17" viewBox="0 0 17 17" fill="none" stroke="#afb1b3" stroke-width="1.4"><rect x="0.7" y="0.7" width="9" height="14" rx="1"/><rect x="8" y="3" width="8" height="7" fill="#353638"/><rect x="9.5" y="4.5" width="5" height="4" fill="#afb1b3" stroke="none"/></svg>
<div class="t" style="left:1913px;top:961px;transform:rotate(90deg);transform-origin:0 0;font-size:13px;color:#b0b0b0">Emulator</div>

<!-- BOTTOM TOOLBAR -->
<div class="a" style="left:0;top:1025px;width:1920px;height:1px;background:#2a2b2c"></div>
<div class="a" style="left:0;top:1026px;width:1920px;height:27px;background:#37383a"></div>
<div class="a" style="left:0;top:1053px;width:1920px;height:1px;background:#2f3032"></div>
<svg style="left:41px;top:1034px" width="14" height="12" viewBox="0 0 14 12" fill="#afb1b3"><rect x="0" y="0" width="2.5" height="2.5"/><rect x="0" y="4.7" width="2.5" height="2.5"/><rect x="0" y="9.4" width="2.5" height="2.5"/><rect x="4" y="0" width="10" height="2.5"/><rect x="4" y="4.7" width="10" height="2.5"/><rect x="4" y="9.4" width="10" height="2.5"/></svg>
<div class="t" style="left:60px;top:1035px;font-size:13px">TODO</div>
<svg style="left:122px;top:1033px" width="14" height="14" viewBox="0 0 14 14"><circle cx="7" cy="7" r="7" fill="#afb1b3"/><rect x="6" y="2.5" width="2" height="6" fill="#37383a"/><rect x="6" y="9.7" width="2" height="2" fill="#37383a"/></svg>
<div class="t" style="left:143px;top:1035px;font-size:13px">Problems</div>
<svg style="left:225px;top:1033px" width="14" height="13" viewBox="0 0 14 13"><rect x="0" y="0" width="14" height="13" fill="#afb1b3"/><path d="M2.5 3 L6 6 L2.5 9" stroke="#37383a" stroke-width="1.4" fill="none"/><rect x="7" y="9" width="5" height="1.4" fill="#37383a"/></svg>
<div class="t" style="left:245px;top:1035px;font-size:13px">Terminal</div>
<svg style="left:320px;top:1035px" width="14" height="12" viewBox="0 0 14 12" fill="#afb1b3"><rect x="0" y="0" width="14" height="2.4"/><rect x="0" y="4.8" width="9" height="2.4"/><rect x="0" y="9.6" width="14" height="2.4"/></svg>
<div class="t" style="left:340px;top:1035px;font-size:13px">Logcat</div>
<svg style="left:404px;top:1035px" width="16" height="12" viewBox="0 0 16 12"><path d="M2 11.5 A6.2 6.2 0 0 1 14 11.5" stroke="#afb1b3" stroke-width="3.2" fill="none"/><path d="M7.2 11.5 L11.5 4 L10 12 Z" fill="#afb1b3" stroke="#37383a" stroke-width="0.8"/></svg>
<div class="t" style="left:425px;top:1035px;font-size:13px">Profiler</div>
<svg style="left:495px;top:1033px" width="14" height="16" viewBox="0 0 14 16" fill="#afb1b3"><path d="M4 0 L10 0 L11 4 L13 6 L11 7 L12 10 L10 11 L11 16 L3 16 L4 11 L2 10 L3 7 L1 6 L3 4 Z"/></svg>
<div class="t" style="left:515px;top:1035px;font-size:13px">App Inspection</div>
<svg style="left:1655px;top:1032px" width="16" height="17" viewBox="0 0 16 17"><path d="M8 1 A7 7 0 0 1 15 8 L15 15.5 L8 15.5 A7 7 0 0 1 8 1 Z" stroke="#afb1b3" stroke-width="1.6" fill="none"/></svg>
<div class="t" style="left:1676px;top:1035px;font-size:13px">Event Log</div>
<svg style="left:1761px;top:1032px" width="17" height="16" viewBox="0 0 17 16" fill="none" stroke="#afb1b3" stroke-width="1.3"><rect x="0.7" y="0.7" width="11" height="9"/><rect x="3" y="3" width="11" height="9" fill="#37383a"/><circle cx="10" cy="9" r="3"/><path d="M12 11 L16 15" stroke-width="1.8"/></svg>
<div class="t" style="left:1783px;top:1035px;font-size:13px">Layout Inspector</div>

<!-- STATUS BAR -->
<div class="a" style="left:0;top:1054px;width:1920px;height:24px;background:#353638"></div>
<svg style="left:6px;top:1058px" width="17" height="16" viewBox="0 0 17 16" fill="none" stroke="#afb1b3" stroke-width="1.4"><rect x="4" y="0.7" width="12" height="11"/><path d="M1 4 L1 15 L12 15"/></svg>
<div class="t" style="left:34px;top:1059px;font-size:14.6px;color:#b8b8b8">* daemon started successfully</div>
<div class="t" style="left:1636px;top:1059px;font-size:14px">14:2</div>
<div class="t" style="left:1678px;top:1059px;font-size:14px">LF</div>
<div class="t" style="left:1706px;top:1059px;font-size:14px;color:#7a7c7e">UTF-8</div>
<div class="t" style="left:1760px;top:1059px;font-size:14px">4 spaces</div>
<svg style="left:1830px;top:1058px" width="15" height="16" viewBox="0 0 15 16"><path d="M2 6 L2 3.5 A3 3 0 0 1 8 3.5" stroke="#afb1b3" stroke-width="1.5" fill="none"/><rect x="5" y="8" width="10" height="8" fill="#afb1b3"/></svg>
<svg style="left:1860px;top:1057px" width="18" height="18" viewBox="0 0 18 18"><circle cx="9" cy="9" r="9" fill="#afb1b3"/><circle cx="6" cy="7" r="1.3" fill="#353638"/><circle cx="12" cy="7" r="1.3" fill="#353638"/><path d="M5 11 Q9 14.5 13 11" stroke="#353638" stroke-width="1.4" fill="none"/></svg>
<svg style="left:1890px;top:1057px" width="18" height="18" viewBox="0 0 18 18"><circle cx="9" cy="9" r="9" fill="#afb1b3"/><circle cx="6" cy="7" r="1.3" fill="#353638"/><circle cx="12" cy="7" r="1.3" fill="#353638"/><path d="M5 13.5 Q9 10 13 13.5" stroke="#353638" stroke-width="1.4" fill="none"/></svg>
<div class="a" style="left:0;top:1078px;width:1920px;height:2px;background:#3c4319"></div>
<div class="a" style="left:0;top:1078px;width:60px;height:2px;background:#353a20"></div>
<div class="a" style="left:60px;top:1078px;width:430px;height:2px;background:#5f6c44"></div>
<div class="a" style="left:1110px;top:1078px;width:61px;height:2px;background:#76862c"></div>

</body></html>
